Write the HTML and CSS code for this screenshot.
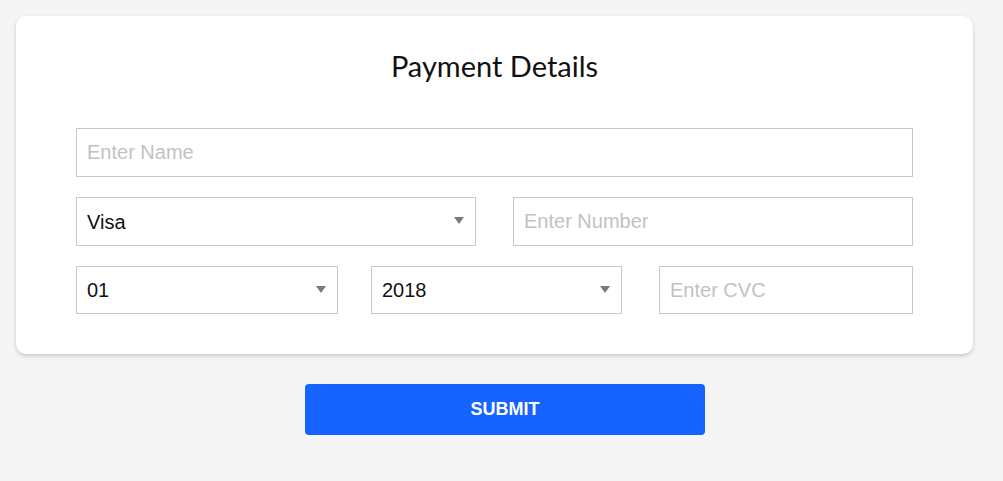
FILE: index.html
```html
<!DOCTYPE html>
<html lang="en">
<head>
  <meta charset="UTF-8" />
  <title>Payment Details</title>
  <link rel="stylesheet" href="styles.css">
</head>
<body>

<div class="page">
  <!-- PAYMENT CARD -->
  <form class="card" onsubmit="return false;">
    <h2 class="card-title">Payment Details</h2>

    <div class="row">
      <input type="text" class="field" placeholder="Enter Name" />
    </div>

    <div class="row">
      <div class="select-wrap w-half">
        <select class="field">
          <option>Visa</option>
          <option>MasterCard</option>
          <option>American Express</option>
        </select>
      </div>
      <input type="text" class="field w-half" placeholder="Enter Number" />
    </div>

    <div class="row">
      <div class="select-wrap w-month">
        <select class="field">
          <option>01</option>
          <option>02</option>
          <option>03</option>
        </select>
      </div>
      <div class="select-wrap w-year">
        <select class="field">
          <option>2018</option>
          <option>2019</option>
          <option>2020</option>
        </select>
      </div>
      <input type="text" class="field w-cvc" placeholder="Enter CVC" />
    </div>
  </form>

  <button class="submit-btn" type="button">SUBMIT</button>
</div>

</body>
</html>
```

FILE: styles.css
```css
body, html {
  margin: 0;
  padding: 0;
  background: #f5f5f5;
  font-family: 'Liberation Sans', Arial, sans-serif;
}

.page {
  padding: 16px 30px 0 16px;
  display: flex;
  flex-direction: column;
  align-items: flex-start;
}

.card {
  width: 957px;
  box-sizing: border-box;
  background: #fff;
  border-radius: 10px;
  box-shadow: 0 2px 4px rgba(0,0,0,0.18);
  padding: 0 60px 40px;
  display: flex;
  flex-direction: column;
  gap: 20px;
}

.card-title {
  margin: 0 0 26px;
  padding-top: 34px;
  text-align: center;
  font-family: 'Lato', sans-serif;
  font-weight: 400;
  font-size: 29px;
  line-height: 32px;
  color: #111;
}

.row {
  display: flex;
  justify-content: space-between;
}

.field {
  width: 100%;
  height: 49px;
  box-sizing: border-box;
  border: 1px solid #c8c8c8;
  border-radius: 0;
  background: #fff;
  padding: 0 10px;
  font-family: 'Liberation Sans', Arial, sans-serif;
  font-size: 20px;
  color: #111;
  outline: none;
}

.field::placeholder {
  color: #c2c2c2;
}

select.field {
  appearance: none;
  -webkit-appearance: none;
  padding-right: 30px;
}

.select-wrap {
  position: relative;
}

.select-wrap::after {
  content: "";
  position: absolute;
  right: 12px;
  top: 20px;
  border-left: 5px solid transparent;
  border-right: 5px solid transparent;
  border-top: 7px solid #7a7a7a;
  pointer-events: none;
}

.w-half { width: 400px; flex: none; }
.w-month { width: 262px; flex: none; }
.w-year { width: 251px; flex: none; margin-left: 33px; }
.w-cvc { width: 254px; flex: none; margin-left: 37px; }

.row:last-child .field { height: 48px; }

.submit-btn {
  margin: 30px 0 0 289px;
  width: 400px;
  height: 51px;
  border: none;
  border-radius: 4px;
  background: #1763ff;
  color: #fff;
  font-family: 'Liberation Sans', Arial, sans-serif;
  font-weight: bold;
  font-size: 18px;
  cursor: pointer;
}
```
